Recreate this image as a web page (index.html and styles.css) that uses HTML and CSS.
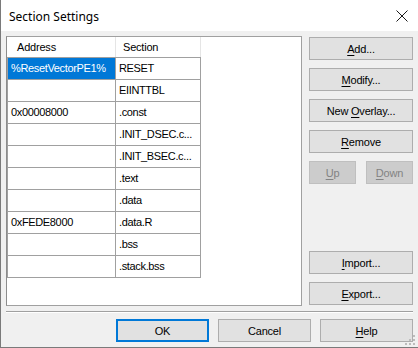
FILE: index.html
```html
<!DOCTYPE html>
<html>
<head>
<meta charset="utf-8">
<link rel="stylesheet" href="styles.css">
</head>
<body>
<div class="window">
  <div class="titlebar">
    <span class="title">Section Settings</span>
    <span class="close"><svg width="12" height="12" viewBox="0 0 12 12"><path d="M0.5 0.5 L11.5 11.5 M11.5 0.5 L0.5 11.5" stroke="#1a1a1a" stroke-width="1" fill="none"/></svg></span>
  </div>
  <div class="client">
    <div class="main">
      <div class="listview">
        <div class="lv-header">
          <div class="hcell c1">Address</div>
          <div class="hcell c2">Section</div>
        </div>
        <div class="rows">
          <div class="cell sel">%ResetVectorPE1%</div><div class="cell">RESET</div>
          <div class="cell"></div><div class="cell">EIINTTBL</div>
          <div class="cell">0x00008000</div><div class="cell">.const</div>
          <div class="cell"></div><div class="cell">.INIT_DSEC.c...</div>
          <div class="cell"></div><div class="cell">.INIT_BSEC.c...</div>
          <div class="cell"></div><div class="cell">.text</div>
          <div class="cell"></div><div class="cell">.data</div>
          <div class="cell">0xFEDE8000</div><div class="cell">.data.R</div>
          <div class="cell"></div><div class="cell">.bss</div>
          <div class="cell"></div><div class="cell">.stack.bss</div>
        </div>
      </div>
      <div class="buttons">
        <button class="btn"><u>A</u>dd...</button>
        <button class="btn"><u>M</u>odify...</button>
        <button class="btn">New <u>O</u>verlay...</button>
        <button class="btn"><u>R</u>emove</button>
        <div class="updown">
          <button class="btn small disabled"><u>U</u>p</button>
          <button class="btn small disabled"><u>D</u>own</button>
        </div>
        <div class="spacer"></div>
        <button class="btn"><u>I</u>mport...</button>
        <button class="btn"><u>E</u>xport...</button>
      </div>
    </div>
    <div class="separator"></div>
    <div class="footer">
      <button class="btn wide default">OK</button>
      <button class="btn wide">Cancel</button>
      <button class="btn wide"><u>H</u>elp</button>
    </div>
  </div>
  <svg class="grip" width="10" height="10" viewBox="0 0 10 10">
    <rect x="8" y="0" width="2" height="2" fill="#bcbcbc"/>
    <rect x="4" y="4" width="2" height="2" fill="#bcbcbc"/>
    <rect x="8" y="4" width="2" height="2" fill="#bcbcbc"/>
    <rect x="0" y="8" width="2" height="2" fill="#bcbcbc"/>
    <rect x="4" y="8" width="2" height="2" fill="#bcbcbc"/>
    <rect x="8" y="8" width="2" height="2" fill="#bcbcbc"/>
  </svg>
</div>
</body>
</html>
```
FILE: styles.css
```css
html, body {
  margin: 0;
  padding: 0;
  background: #f0f0f0;
}
.window {
  position: relative;
  width: 418px;
  height: 348px;
  box-sizing: border-box;
  border-left: 1px solid #7a7a7a;
  border-bottom: 1px solid #7a7a7a;
  display: flex;
  flex-direction: column;
  font-family: "Liberation Sans", Arial, sans-serif;
  font-size: 11px;
  letter-spacing: -0.2px;
  color: #000;
  overflow: hidden;
}
.titlebar {
  height: 31px;
  flex: none;
  background: #fff;
  display: flex;
  align-items: center;
  justify-content: space-between;
  padding-left: 8px;
  padding-right: 10px;
}
.title {
  font-family: "Noto Sans", "Open Sans", sans-serif;
  font-size: 12px;
  letter-spacing: 0;
  color: #000;
  margin-top: 1px;
}
.close {
  display: flex;
  width: 12px;
  height: 12px;
  margin-top: 1px;
}
.client {
  flex: 1;
  background: #f0f0f0;
  padding: 5px 5px 0 5px;
  display: flex;
  flex-direction: column;
}
.main {
  display: flex;
  height: 270px;
}
.listview {
  width: 296px;
  height: 270px;
  box-sizing: border-box;
  border: 1px solid #a0a0a0;
  border-left-color: #8c8c8c;
  background: #fff;
  display: flex;
  flex-direction: column;
}
.lv-header {
  display: flex;
  height: 20px;
  flex: none;
}
.hcell {
  box-sizing: border-box;
  height: 20px;
  line-height: 20px;
  border-right: 1px solid #e5e5e5;
  color: #000;
}
.hcell.c1 {
  width: 109px;
  padding-left: 10px;
}
.hcell.c2 {
  width: 85px;
  padding-left: 7px;
}
.rows {
  display: grid;
  grid-template-columns: 107px 84px;
  grid-auto-rows: 21px;
  gap: 1px;
  background: #a0a0a0;
  border: 1px solid #a0a0a0;
  width: max-content;
}
.cell {
  background: #fff;
  line-height: 21px;
  padding-left: 3px;
  white-space: nowrap;
  overflow: hidden;
  letter-spacing: -0.35px;
}
.cell.sel {
  background: #0078d7;
  color: #fff;
}
.buttons {
  width: 104px;
  margin-left: 7px;
  padding: 1px 0 1px 0;
  box-sizing: border-box;
  display: flex;
  flex-direction: column;
  gap: 8px;
}
.spacer {
  flex: 1;
}
.btn {
  box-sizing: border-box;
  height: 23px;
  width: 104px;
  background: #e1e1e1;
  border: 1px solid #adadad;
  font-family: "Liberation Sans", Arial, sans-serif;
  font-size: 11px;
  letter-spacing: -0.2px;
  color: #000;
  padding: 0;
  margin: 0;
  flex: none;
}
.btn u {
  text-decoration: underline;
  text-underline-offset: 2px;
}
.updown {
  display: flex;
  justify-content: space-between;
}
.btn.small {
  width: 47px;
}
.btn.disabled {
  background: #cccccc;
  border-color: #bfbfbf;
  color: #838383;
}
.separator {
  margin-top: 5px;
  height: 1px;
  border-top: 1px solid #a0a0a0;
  background: #fff;
}
.footer {
  display: flex;
  justify-content: flex-end;
  gap: 9px;
  margin-top: 6px;
}
.btn.wide {
  width: 93px;
}
.btn.default {
  border: 2px solid #0078d7;
}
.grip {
  position: absolute;
  right: 3px;
  bottom: 2px;
}
```
